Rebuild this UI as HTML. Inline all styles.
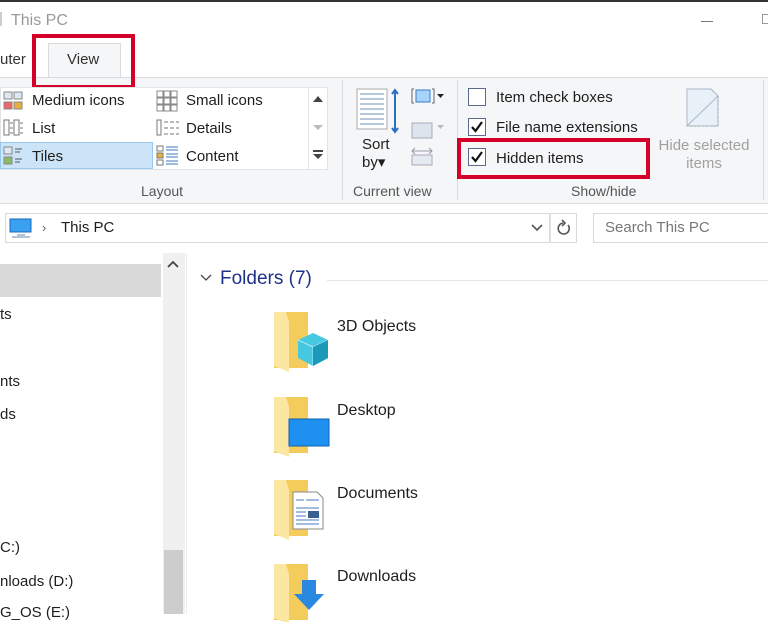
<!DOCTYPE html>
<html><head><meta charset="utf-8"><style>
*{margin:0;padding:0;box-sizing:border-box}
body{width:768px;height:614px;overflow:hidden;background:#fff;font-family:"Liberation Sans",sans-serif;color:#1e1e1e;position:relative}
.a{position:absolute;white-space:nowrap}
.t{font-size:15px}
.g{color:#555;font-size:14px}
.dis{color:#a0a0a0}
</style></head><body>
<div class="a" style="left:0;top:0;width:768px;height:2px;background:#333"></div>
<div class="a" style="left:0;top:12px;width:2px;height:14px;background:#ccc"></div>
<div class="a t" style="left:11px;top:12px;color:#999;font-size:16px">This PC</div>
<div class="a" style="left:701px;top:21px;width:12px;height:1px;background:#777"></div>
<div class="a" style="left:762px;top:14px;width:8px;height:10px;border:1px solid #999"></div>
<!-- tabs -->
<div class="a t" style="left:0;top:51px;color:#333">uter</div>
<div class="a" style="left:48px;top:43px;width:73px;height:36px;background:#f5f6f7;border:1px solid #dadbdc;border-bottom:none"></div>
<div class="a t" style="left:67px;top:51px;color:#333">View</div>
<!-- ribbon -->
<div class="a" style="left:0;top:77px;width:768px;height:127px;background:#f5f6f7;border-top:1px solid #dadbdc;border-bottom:1px solid #dadbdc"></div>
<div class="a" style="left:32px;top:34px;width:103px;height:55px;border:4px solid #d5002a"></div>
<!-- layout gallery -->
<div class="a" style="left:0;top:87px;width:328px;height:83px;background:#fff;border:1px solid #e2e3e4"></div>
<div class="a" style="left:308px;top:87px;width:20px;height:83px;border-left:1px solid #e2e3e4"></div>
<div class="a" style="left:313px;top:96px;width:0;height:0;border-left:5px solid transparent;border-right:5px solid transparent;border-bottom:6px solid #444"></div>
<div class="a" style="left:313px;top:125px;width:0;height:0;border-left:5px solid transparent;border-right:5px solid transparent;border-top:5px solid #bbb"></div>
<div class="a" style="left:313px;top:150px;width:10px;height:2px;background:#444"></div>
<div class="a" style="left:313px;top:154px;width:0;height:0;border-left:5px solid transparent;border-right:5px solid transparent;border-top:5px solid #444"></div>
<div class="a" style="left:0;top:142px;width:153px;height:27px;background:#cce4f7;border:1px solid #99c9ef"></div>
<svg class="a" style="left:3px;top:91px" width="20" height="20"><rect x="1" y="1" width="8" height="7" fill="#dfe8f0" stroke="#888"/><rect x="11" y="1" width="8" height="7" fill="#dfe8f0" stroke="#888"/><rect x="1" y="11" width="8" height="7" fill="#e66" stroke="#888"/><rect x="11" y="11" width="8" height="7" fill="#e8b040" stroke="#888"/></svg>
<svg class="a" style="left:3px;top:119px" width="20" height="18"><g fill="none" stroke="#777"><rect x="1" y="1" width="5" height="15"/><rect x="11" y="1" width="5" height="15"/></g><path d="M7 4h3M7 9h3M7 14h3M17 4h3M17 9h3M17 14h3" stroke="#777"/></svg>
<svg class="a" style="left:3px;top:146px" width="22" height="20"><rect x="1" y="1" width="8" height="7" fill="#dfe8f0" stroke="#888"/><rect x="1" y="11" width="8" height="7" fill="#8b6" stroke="#888"/><path d="M12 3h7M12 6h5M12 13h7M12 16h5" stroke="#555"/></svg>
<div class="a t" style="left:32px;top:92px">Medium icons</div>
<div class="a t" style="left:32px;top:120px">List</div>
<div class="a t" style="left:32px;top:148px">Tiles</div>
<svg class="a" style="left:156px;top:90px" width="22" height="22"><g fill="#fff" stroke="#888"><rect x="1" y="1" width="6" height="6"/><rect x="8" y="1" width="6" height="6"/><rect x="15" y="1" width="6" height="6"/><rect x="1" y="8" width="6" height="6"/><rect x="8" y="8" width="6" height="6"/><rect x="15" y="8" width="6" height="6"/><rect x="1" y="15" width="6" height="6"/><rect x="8" y="15" width="6" height="6"/><rect x="15" y="15" width="6" height="6"/></g></svg>
<svg class="a" style="left:156px;top:119px" width="24" height="18"><rect x="1" y="1" width="4" height="15" fill="none" stroke="#777"/><path d="M8 3h4M14 3h4M20 3h3M8 9h4M14 9h4M20 9h3M8 15h4M14 15h4M20 15h3" stroke="#777"/></svg>
<svg class="a" style="left:156px;top:145px" width="24" height="22"><rect x="1" y="1" width="6" height="5" fill="none" stroke="#777"/><rect x="1" y="8" width="6" height="5" fill="#e8b040" stroke="#777"/><rect x="1" y="15" width="6" height="5" fill="none" stroke="#777"/><path d="M10 2h12M10 5h12M10 9h12M10 12h12M10 16h12M10 19h12" stroke="#3a78c8"/></svg>
<div class="a t" style="left:186px;top:92px">Small icons</div>
<div class="a t" style="left:186px;top:120px">Details</div>
<div class="a t" style="left:186px;top:148px">Content</div>
<div class="a g" style="left:141px;top:183px">Layout</div>
<div class="a" style="left:342px;top:80px;width:1px;height:120px;background:#dadbdc"></div>
<!-- current view -->
<svg class="a" style="left:356px;top:88px" width="44" height="50"><rect x="1" y="1" width="30" height="40" fill="#fff" stroke="#aaa"/><path d="M4 6h24M4 11h24M4 16h24M4 21h24M4 26h24M4 31h24M4 36h24" stroke="#b8c8dc" stroke-width="2"/><path d="M39 3v40M36 6l3-4 3 4M36 40l3 4 3-4" stroke="#2a6fc0" stroke-width="2" fill="none"/></svg>
<div class="a t" style="left:362px;top:136px;line-height:18px">Sort<br>by▾</div>
<svg class="a" style="left:410px;top:87px" width="36" height="80"><path d="M4 2h-2v14h2M22 2h2v14h-2" stroke="#666" fill="none"/><rect x="6" y="3" width="14" height="12" fill="#a6d4fa" stroke="#3a78c8"/><path d="M27 7h7l-3.5 4z" fill="#222"/><rect x="2" y="36" width="20" height="15" fill="#dce4ee" stroke="#aab"/><path d="M27 38h7l-3.5 4z" fill="#bbb"/><path d="M2 64h20M5 61l-3 3 3 3M19 61l3 3-3 3" stroke="#99a" fill="none"/><rect x="2" y="68" width="20" height="10" fill="#e4eaf0" stroke="#aab"/></svg>
<div class="a g" style="left:353px;top:183px">Current view</div>
<div class="a" style="left:457px;top:80px;width:1px;height:120px;background:#dadbdc"></div>
<!-- show/hide -->
<div class="a" style="left:468px;top:88px;width:18px;height:18px;border:1px solid #5a6a8a;background:#fff"></div>
<div class="a" style="left:468px;top:118px;width:18px;height:18px;border:1px solid #5a6a8a;background:#fff"></div>
<div class="a" style="left:468px;top:148px;width:18px;height:18px;border:1px solid #5a6a8a;background:#fff"></div>
<svg class="a" style="left:470px;top:120px" width="14" height="14"><path d="M2 7l3.5 4L12 2" stroke="#111" stroke-width="2.2" fill="none"/></svg>
<svg class="a" style="left:470px;top:150px" width="14" height="14"><path d="M2 7l3.5 4L12 2" stroke="#111" stroke-width="2.2" fill="none"/></svg>
<div class="a t" style="left:496px;top:89px">Item check boxes</div>
<div class="a t" style="left:496px;top:119px">File name extensions</div>
<div class="a t" style="left:496px;top:150px">Hidden items</div>
<div class="a" style="left:457px;top:138px;width:193px;height:41px;border:4px solid #d5002a"></div>
<svg class="a" style="left:686px;top:88px" width="34" height="40"><path d="M1 1h24l7 7v30H1z" fill="#e8f0f8" stroke="#aab8c8"/><path d="M1 38L32 8" stroke="#aab8c8"/><path d="M32 8v30H1" fill="none" stroke="#9aa" stroke-dasharray="2 2"/></svg>
<div class="a dis" style="left:656px;top:137px;font-size:15px;text-align:center;line-height:18px;width:96px">Hide selected<br>items</div>
<div class="a g" style="left:571px;top:183px">Show/hide</div>
<div class="a" style="left:763px;top:80px;width:1px;height:120px;background:#dadbdc"></div>
<!-- address -->
<div class="a" style="left:5px;top:213px;width:545px;height:30px;border:1px solid #d9d9d9"></div>
<div class="a" style="left:550px;top:213px;width:27px;height:30px;border:1px solid #d9d9d9;border-left:1px solid #e5e5e5"></div>
<svg class="a" style="left:9px;top:217px" width="24" height="22"><rect x="1" y="2" width="21" height="13" fill="#3aa0f0" stroke="#1a6ab8"/><path d="M8 18h8M3 20h18" stroke="#6a8aa8"/></svg>
<div class="a" style="left:42px;top:220px;color:#666;font-size:13px">›</div>
<div class="a t" style="left:61px;top:219px">This PC</div>
<svg class="a" style="left:530px;top:222px" width="14" height="12"><path d="M2 3l5 5 5-5" stroke="#555" stroke-width="1.6" fill="none"/></svg>
<svg class="a" style="left:556px;top:218px" width="16" height="20"><path d="M12 7a5.5 5.5 0 1 1-5-2" stroke="#555" stroke-width="1.6" fill="none"/><path d="M6 2l3 3-3 3" stroke="#555" stroke-width="1.6" fill="none"/></svg>
<div class="a" style="left:593px;top:213px;width:180px;height:30px;border:1px solid #d9d9d9"></div>
<div class="a t" style="left:605px;top:219px;color:#777">Search This PC</div>
<!-- nav pane -->
<div class="a" style="left:0;top:264px;width:161px;height:33px;background:#d9d9d9"></div>
<div class="a" style="left:163px;top:253px;width:22px;height:361px;background:#f0f0f0"></div>
<div class="a" style="left:164px;top:550px;width:19px;height:64px;background:#cdcdcd"></div>
<svg class="a" style="left:166px;top:259px" width="14" height="10"><path d="M2 8l5-5 5 5" stroke="#444" stroke-width="1.8" fill="none"/></svg>
<div class="a" style="left:186px;top:253px;width:1px;height:361px;background:#ededed"></div>
<div class="a t" style="left:0;top:306px">ts</div>
<div class="a t" style="left:0;top:373px">nts</div>
<div class="a t" style="left:0;top:406px">ds</div>
<div class="a t" style="left:0;top:539px">C:)</div>
<div class="a t" style="left:0;top:573px">nloads (D:)</div>
<div class="a t" style="left:0;top:604px">G_OS (E:)</div>
<!-- content -->
<svg class="a" style="left:199px;top:272px" width="16" height="12"><path d="M2 3l5 5 5-5" stroke="#445" stroke-width="1.3" fill="none"/></svg>
<div class="a" style="left:220px;top:268px;color:#1e3287;font-size:19px">Folders (7)</div>
<div class="a" style="left:327px;top:280px;width:441px;height:1px;background:#e5e5e5"></div>
<svg width="0" height="0" style="position:absolute"><defs><g id="f"><path d="M0 2h34v56H0z" fill="#f4cc5c"/><path d="M0 2h12l3 10v50L0 56z" fill="#fbe6a2"/></g></defs></svg>
<svg class="a" style="left:274px;top:310px" width="60" height="70"><use href="#f" x="0" y="0"/><path d="M24 30l15-7 15 7v18l-15 8-15-8z" fill="#45c8e0"/><path d="M24 30l15 7 15-7M39 37v19" stroke="#fff" stroke-opacity=".6" fill="none"/><path d="M39 37l15-7v18l-15 8z" fill="#1a9ab8"/></svg>
<svg class="a" style="left:274px;top:395px" width="60" height="70"><use href="#f"/><rect x="15" y="24" width="40" height="27" fill="#1e90f0" stroke="#1060b0"/></svg>
<svg class="a" style="left:274px;top:478px" width="60" height="70"><use href="#f"/><path d="M19 14h24l6 6v31H19z" fill="#fff" stroke="#888"/><path d="M22 22h8M32 22h13M22 30h23M22 34h10M22 38h10M22 42h23M22 46h23" stroke="#4a7ac0"/><rect x="34" y="33" width="11" height="7" fill="#3a6090"/></svg>
<svg class="a" style="left:274px;top:562px" width="60" height="60"><use href="#f"/><path d="M28 18h14v14h8L35 48 20 32h8z" fill="#2a88e0"/></svg>
<div class="a" style="left:337px;top:318px;font-size:16px">3D Objects</div>
<div class="a" style="left:337px;top:402px;font-size:16px">Desktop</div>
<div class="a" style="left:337px;top:485px;font-size:16px">Documents</div>
<div class="a" style="left:337px;top:568px;font-size:16px">Downloads</div>
</body></html>
